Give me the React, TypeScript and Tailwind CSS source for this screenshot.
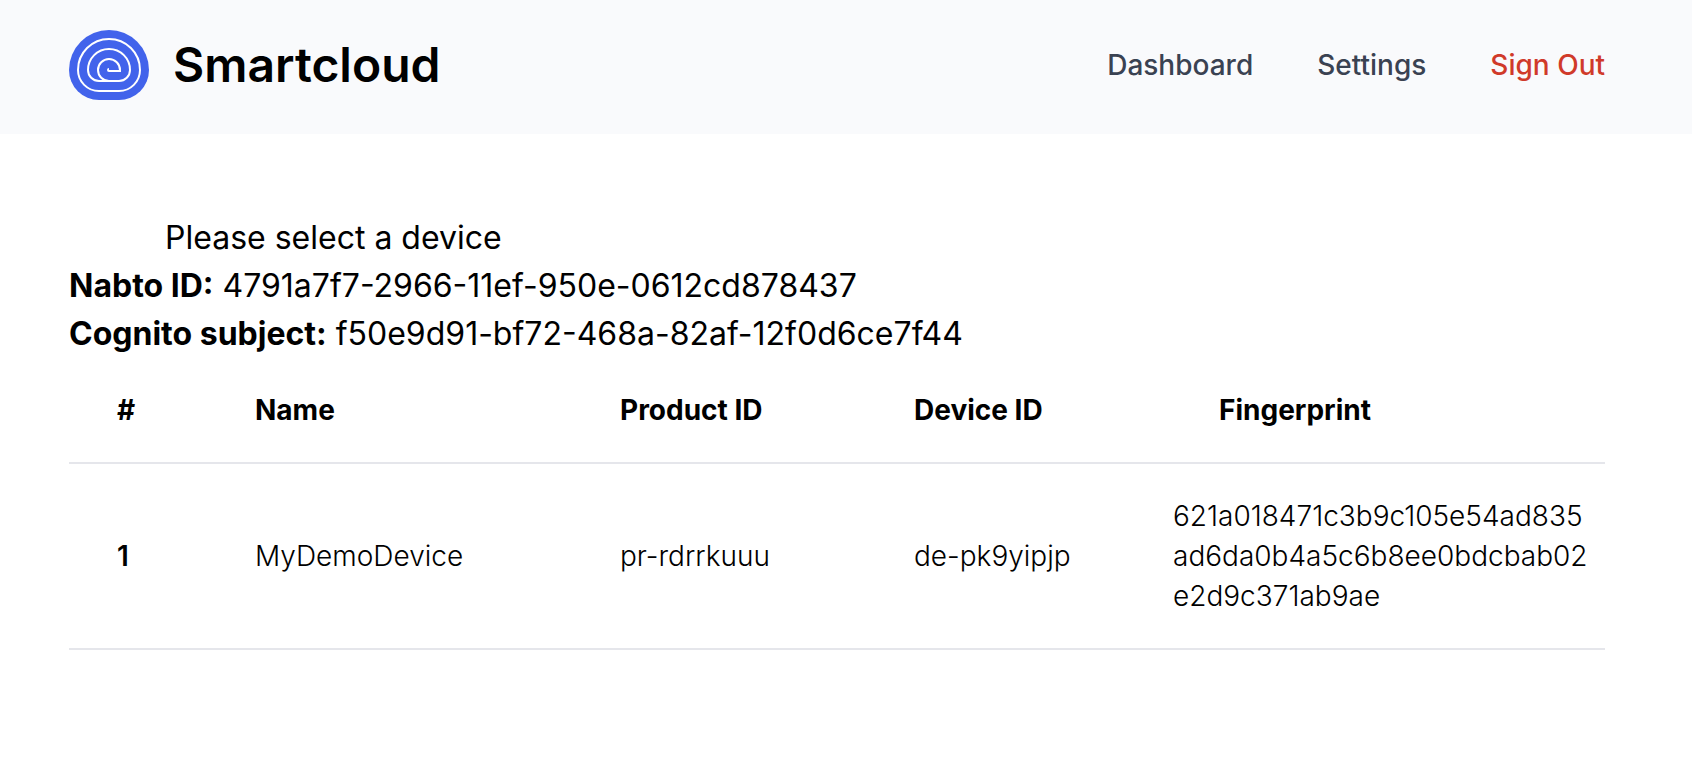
const devices = [
    {
        name: 'MyDemoDevice',
        productId: 'pr-rdrrkuuu',
        deviceId: 'de-pk9yipjp',
        fingerprint: '621a018471c3b9c105e54ad835ad6da0b4a5c6b8ee0bdcbab02e2d9c371ab9ae',
    },
];

const user = {
    nabtoId: '4791a7f7-2966-11ef-950e-0612cd878437',
    subject: 'f50e9d91-bf72-468a-82af-12f0d6ce7f44',
};

function Logo() {
    return (
        <svg className="w-20 shrink-0" viewBox="0 0 240 210" fill="none" aria-hidden="true">
            <path
                d="M0 120A120 120 0 0 1 240 120A90 90 0 0 1 150 210H90A90 90 0 0 1 0 120Z"
                fill="#4263eb"
            />
            <g stroke="#fff" strokeWidth="6">
                <path d="M27 120A93 93 0 0 1 213 120A63 63 0 0 1 150 183H90A63 63 0 0 1 27 120Z" />
                {/* spiral */}
                <path d="M120 117A3 3 0 0 0 120 123H153V120A33 33 0 0 0 87 120A33 33 0 0 0 120 153" />
                <path d="M150 153H90A33 33 0 0 1 57 120A63 63 0 0 1 183 120A33 33 0 0 1 150 153Z" />
            </g>
        </svg>
    );
}

function Header() {
    return (
        <header className="bg-[#f9fafc] pl-[69px] pr-[87px] pt-[30px] pb-[34px] flex items-center justify-between">
            <a href="#" className="flex items-center gap-6">
                <Logo />
                <span className="text-5xl font-semibold">Smartcloud</span>
            </a>
            <nav className="flex gap-16 text-[28px] leading-10 font-medium text-[#3a4252]">
                <a href="#dashboard">Dashboard</a>
                <a href="#settings">Settings</a>
                <button type="button" className="text-[#d03a2a]">Sign Out</button>
            </nav>
        </header>
    );
}

function DeviceTable() {
    return (
        <table className="w-full table-fixed text-left text-[28px] leading-10">
            <thead className="font-bold">
                <tr className="border-b-2 border-[#e5e6eb]">
                    <th scope="col" className="w-[138px] px-12 py-8">#</th>
                    <th scope="col" className="w-[365px] px-12 py-8">Name</th>
                    <th scope="col" className="w-[294px] px-12 py-8">Product ID</th>
                    <th scope="col" className="w-[305px] px-12 py-8">Device ID</th>
                    <th scope="col" className="px-12 py-8">Fingerprint</th>
                </tr>
            </thead>
            <tbody className="font-light">
                {devices.map((device, i) => (
                    <tr key={device.fingerprint} className="border-b-2 border-[#e5e6eb]">
                        <td className="px-12 py-8 font-semibold">{i + 1}</td>
                        <td className="px-12 py-8">{device.name}</td>
                        <td className="px-12 py-8">{device.productId}</td>
                        <td className="px-12 py-8">{device.deviceId}</td>
                        <td className="pl-0.5 pr-3 py-8 break-all">{device.fingerprint}</td>
                    </tr>
                ))}
            </tbody>
        </table>
    );
}

export default function App() {
    return (
        <div className="min-h-screen bg-white text-black font-['Inter',sans-serif]">
            <Header />
            <main className="pl-[69px] pr-[87px] pt-20 text-[32px] leading-12">
                <p className="pl-24">Please select a device</p>
                <p><b>Nabto ID:</b> {user.nabtoId}</p>
                <p><b>Cognito subject:</b> {user.subject}</p>
                <DeviceTable />
            </main>
        </div>
    );
}
